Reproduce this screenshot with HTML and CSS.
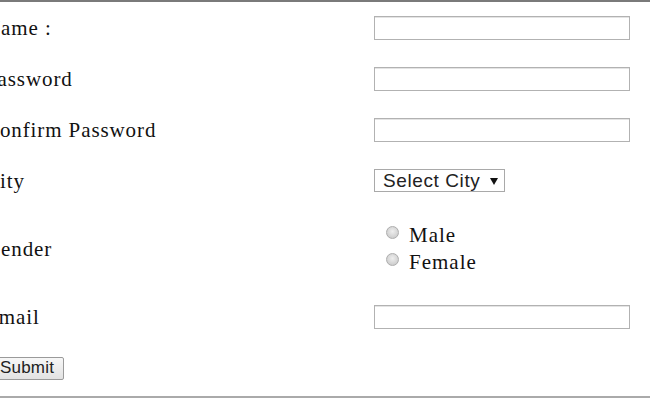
FILE: index.html
```html
<!DOCTYPE html>
<html lang="en">
<head>
    <meta charset="UTF-8">
    <meta name="viewport" content="width=device-width, initial-scale=1.0">
    <title>Registration Form</title>
    <link rel="stylesheet" href="styles.css">
</head>
<body>
    <form class="signup" id="signupForm">
        <div class="row">
            <label class="field-label" for="name">Name :</label>
            <input type="text" id="name" name="name">
        </div>

        <div class="row">
            <label class="field-label" for="password">Password</label>
            <input type="password" id="password" name="password">
        </div>

        <div class="row">
            <label class="field-label" for="confirm">Confirm Password</label>
            <input type="password" id="confirm" name="confirm">
        </div>

        <div class="row">
            <label class="field-label" for="city">City</label>
            <span class="select-wrap">
                <select id="city" name="city">
                    <option value="">Select City</option>
                    <option value="delhi">Delhi</option>
                    <option value="mumbai">Mumbai</option>
                    <option value="pune">Pune</option>
                </select>
            </span>
        </div>

        <div class="row row-gender">
            <span class="field-label">Gender</span>
            <div class="radios">
                <label><input type="radio" name="gender" value="male">Male</label>
                <label><input type="radio" name="gender" value="female">Female</label>
            </div>
        </div>

        <div class="row row-email">
            <label class="field-label" for="email">Email</label>
            <input type="text" id="email" name="email">
        </div>

        <div class="row row-submit">
            <input type="submit" value="Submit">
        </div>
    </form>
</body>
</html>
```

FILE: styles.css
```css
body {
    margin: 0;
    background-color: #fff;
    font-family: "Liberation Serif", "Times New Roman", serif;
    color: #111;
}

.signup {
    margin: 0 0 0 -15px;
    border-top: 2px solid #7a7a7a;
    border-bottom: 2px solid #aaa;
    padding-bottom: 3px;
}

.row {
    display: flex;
    align-items: center;
    height: 51px;
}

.row-gender {
    height: 85px;
}

.row-email {
    height: 52px;
}

.row-submit {
    height: 50px;
    padding-left: 5px;
}

.field-label {
    flex: 0 0 389px;
    font-size: 21px;
    letter-spacing: 0.9px;
    padding-top: 1px;
}

input[type="text"],
input[type="password"] {
    width: 256px;
    height: 24px;
    margin: 0;
    padding: 0 4px;
    box-sizing: border-box;
    border: 1px solid #b2b2b2;
    box-shadow: inset 0 1px 0 #e4e4e4;
    background-color: #fff;
}

.select-wrap {
    position: relative;
    display: inline-block;
}

.select-wrap::after {
    content: "";
    position: absolute;
    right: 7px;
    top: 9px;
    border-left: 4.5px solid transparent;
    border-right: 4.5px solid transparent;
    border-top: 7px solid #111;
    pointer-events: none;
}

select {
    -webkit-appearance: none;
    appearance: none;
    width: 131px;
    height: 23px;
    margin: 0;
    padding: 0 0 0 8px;
    box-sizing: border-box;
    border: 1px solid #a9a9a9;
    border-radius: 0;
    background-color: #fff;
    font-family: "Liberation Sans", Arial, sans-serif;
    font-size: 19px;
    letter-spacing: 0.6px;
    line-height: 21px;
    color: #222;
}

.radios label {
    display: block;
    line-height: 27px;
    font-size: 21px;
    letter-spacing: 1px;
}

.radios input[type="radio"] {
    -webkit-appearance: none;
    appearance: none;
    width: 13px;
    height: 13px;
    margin: 0 10px 3px 12px;
    border: 1px solid #adadad;
    border-radius: 50%;
    background: radial-gradient(circle at 50% 40%, #eee 0, #d0d0d0 70%, #c2c2c2 100%);
    box-sizing: border-box;
    vertical-align: baseline;
}

input[type="submit"] {
    height: 23px;
    margin: 0;
    padding: 0 9px;
    border: 1px solid #9a9a9a;
    border-radius: 2px;
    background: linear-gradient(#f7f7f7, #e2e2e2);
    font-family: "Liberation Sans", Arial, sans-serif;
    font-size: 17px;
    letter-spacing: 0.2px;
    color: #222;
    cursor: pointer;
}
```
